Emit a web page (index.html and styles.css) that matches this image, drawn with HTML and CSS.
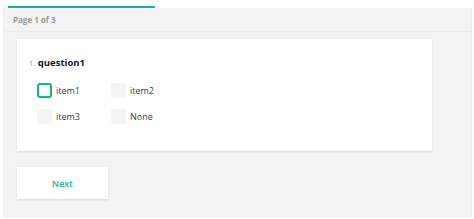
FILE: index.html
```html
<!DOCTYPE html>
<html lang="en">
<head>
  <meta charset="UTF-8">
  <title>Survey</title>
  <link rel="stylesheet" href="styles.css">
</head>
<body>
  <div class="survey">
    <div class="progress">
      <div class="progress-bar"></div>
    </div>
    <div class="survey-body">
      <div class="page-title">Page 1 of 3</div>
      <div class="page">
        <div class="question">
          <div class="question-title">
            <span class="question-num">1.</span>
            <span class="question-text">question1</span>
          </div>
          <div class="choices">
            <label class="choice">
              <span class="check focused"></span>
              <span class="choice-text">item1</span>
            </label>
            <label class="choice">
              <span class="check"></span>
              <span class="choice-text">item2</span>
            </label>
            <label class="choice">
              <span class="check"></span>
              <span class="choice-text">item3</span>
            </label>
            <label class="choice">
              <span class="check"></span>
              <span class="choice-text">None</span>
            </label>
          </div>
        </div>
      </div>
      <div class="footer">
        <button class="next-btn">Next</button>
      </div>
    </div>
  </div>
</body>
</html>
```

FILE: styles.css
```css
body {
  font-family: "Open Sans", "Liberation Sans", Arial, sans-serif;
  background-color: #fff;
  margin: 0;
  padding: 0;
}
.survey {
  margin-left: 3px;
  width: 469px;
}
.progress {
  height: 8px;
  background-color: #fff;
  display: flex;
  align-items: flex-end;
}
.progress-bar {
  margin-left: 5px;
  width: 147px;
  height: 2px;
  background-color: #19b394;
}
.survey-body {
  background-color: #f3f3f3;
  height: 209px;
  border-left: 1px solid #ebebeb;
  border-right: 1px solid #ebebeb;
  box-sizing: border-box;
}
.page-title {
  font-size: 8px;
  font-weight: bold;
  color: #9a9a9a;
  padding: 6px 0 0 9px;
  height: 17px;
  border-bottom: 1px solid #ebebeb;
}
.page {
  margin: 7px 39px 0 13px;
  height: 112px;
  background-color: #fff;
  box-shadow: 0 1px 2px rgba(0, 0, 0, 0.12);
  box-sizing: border-box;
  padding: 17px 12px 0 12px;
}
.question-title {
  display: flex;
  align-items: baseline;
  gap: 3px;
  height: 14px;
}
.question-num {
  font-size: 7px;
  color: #8a8a8a;
}
.question-text {
  font-size: 9.5px;
  font-weight: bold;
  color: #161616;
}
.choices {
  display: grid;
  grid-template-columns: 74px 74px;
  row-gap: 11px;
  margin-top: 13px;
  padding-left: 8px;
}
.choice {
  display: flex;
  align-items: center;
  gap: 4px;
  height: 15px;
}
.check {
  width: 15px;
  height: 15px;
  box-sizing: border-box;
  background-color: #f5f5f5;
  border-radius: 2px;
}
.check.focused {
  background-color: #fff;
  border: 2px solid #19b394;
  border-radius: 3px;
}
.choice-text {
  font-size: 9px;
  color: #404040;
}
.footer {
  padding: 16px 0 0 13px;
}
.next-btn {
  width: 91px;
  height: 32px;
  border: none;
  background-color: #fff;
  box-shadow: 0 1px 2px rgba(0, 0, 0, 0.12);
  color: #19b394;
  font-family: inherit;
  font-size: 9px;
  font-weight: 600;
}
```
